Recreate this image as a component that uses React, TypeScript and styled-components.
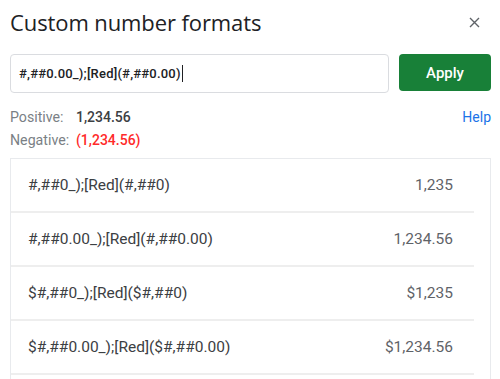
import React from 'react';
import styled, { createGlobalStyle } from 'styled-components';

const GlobalStyle = createGlobalStyle`
  html, body {
    margin: 0;
    padding: 0;
    background: #fff;
    overflow: hidden;
  }
  body {
    font-family: Roboto, "Liberation Sans", Arial, sans-serif;
  }
`;

interface FormatItem {
  pattern: string;
  sample: string;
}

const formats: FormatItem[] = [
  { pattern: '#,##0_);[Red](#,##0)', sample: '1,235' },
  { pattern: '#,##0.00_);[Red](#,##0.00)', sample: '1,234.56' },
  { pattern: '$#,##0_);[Red]($#,##0)', sample: '$1,235' },
  { pattern: '$#,##0.00_);[Red]($#,##0.00)', sample: '$1,234.56' },
];

const Dialog = styled.div`
  width: 500px;
  height: 379px;
  padding: 0 9px 0 10px;
  box-sizing: border-box;
  display: flex;
  flex-direction: column;
  overflow: hidden;
`;

const Header = styled.div`
  display: flex;
  align-items: center;
  justify-content: space-between;
  height: 44px;
`;

const Title = styled.h1`
  margin: 0;
  font-family: "Open Sans", Roboto, sans-serif;
  font-weight: 400;
  font-size: 22px;
  color: #202124;
  letter-spacing: -0.1px;
`;

const CloseButton = styled.button`
  border: none;
  background: none;
  padding: 0;
  margin-right: 10px;
  width: 14px;
  height: 14px;
  display: flex;
  align-items: center;
  justify-content: center;
  cursor: pointer;
`;

const InputRow = styled.div`
  display: flex;
  gap: 10px;
  margin-top: 10px;
  align-items: flex-start;
`;

const FormatInput = styled.div`
  flex: 1;
  height: 39px;
  box-sizing: border-box;
  border: 1px solid #dadce0;
  border-radius: 4px;
  display: flex;
  align-items: center;
  padding-left: 8px;
  font-size: 13px;
  font-weight: 500;
  letter-spacing: 0.2px;
  color: #202124;
`;

const Caret = styled.span`
  display: inline-block;
  width: 1px;
  height: 17px;
  background: #202124;
  margin-left: 1px;
`;

const ApplyButton = styled.button`
  width: 92px;
  height: 37px;
  border: none;
  border-radius: 4px;
  background: #188038;
  color: #fff;
  font-family: Roboto, sans-serif;
  font-size: 15px;
  font-weight: 500;
  cursor: pointer;
`;

const Preview = styled.div`
  display: flex;
  justify-content: space-between;
  margin-top: 15px;
`;

const PreviewLines = styled.div`
  display: flex;
  flex-direction: column;
  gap: 4px;
`;

const PreviewLine = styled.div`
  display: flex;
  align-items: baseline;
  line-height: 19px;
`;

const PreviewLabel = styled.span`
  width: 66px;
  font-size: 14.2px;
  color: #7a7f85;
`;

const PreviewValue = styled.span<{ $negative?: boolean }>`
  font-size: 14px;
  font-weight: 500;
  color: ${({ $negative }) => ($negative ? '#ff2a2a' : '#3c4043')};
`;

const HelpLink = styled.a`
  font-size: 14px;
  color: #1a73e8;
  text-decoration: none;
  line-height: 19px;
`;

const FormatList = styled.div`
  margin-top: 8px;
  border: 1px solid #e8eaed;
  border-bottom: none;
  flex: 1;
  overflow: hidden;
  padding-right: 16px;
`;

const FormatRow = styled.div`
  height: 54px;
  box-sizing: border-box;
  display: flex;
  align-items: center;
  justify-content: space-between;
  padding: 0 21px 0 17px;
  border-bottom: 2px solid #eeeeee;
  font-size: 15.5px;
  color: #3c4043;
`;

const Sample = styled.span`
  color: #5f6368;
`;

const App: React.FC = () => {
  return (
    <>
      <GlobalStyle />
      <Dialog>
        <Header>
          <Title>Custom number formats</Title>
          <CloseButton aria-label="Close">
            <svg width="11" height="11" viewBox="0 0 11 11">
              <path d="M1 1 L10 10 M10 1 L1 10" stroke="#5f6368" strokeWidth="1.4" />
            </svg>
          </CloseButton>
        </Header>
        <InputRow>
          <FormatInput>
            #,##0.00_);[Red](#,##0.00)
            <Caret />
          </FormatInput>
          <ApplyButton>Apply</ApplyButton>
        </InputRow>
        <Preview>
          <PreviewLines>
            <PreviewLine>
              <PreviewLabel>Positive:</PreviewLabel>
              <PreviewValue>1,234.56</PreviewValue>
            </PreviewLine>
            <PreviewLine>
              <PreviewLabel>Negative:</PreviewLabel>
              <PreviewValue $negative>(1,234.56)</PreviewValue>
            </PreviewLine>
          </PreviewLines>
          <HelpLink href="#">Help</HelpLink>
        </Preview>
        <FormatList>
          {formats.map((f) => (
            <FormatRow key={f.pattern}>
              <span>{f.pattern}</span>
              <Sample>{f.sample}</Sample>
            </FormatRow>
          ))}
        </FormatList>
      </Dialog>
    </>
  );
};

export default App;
